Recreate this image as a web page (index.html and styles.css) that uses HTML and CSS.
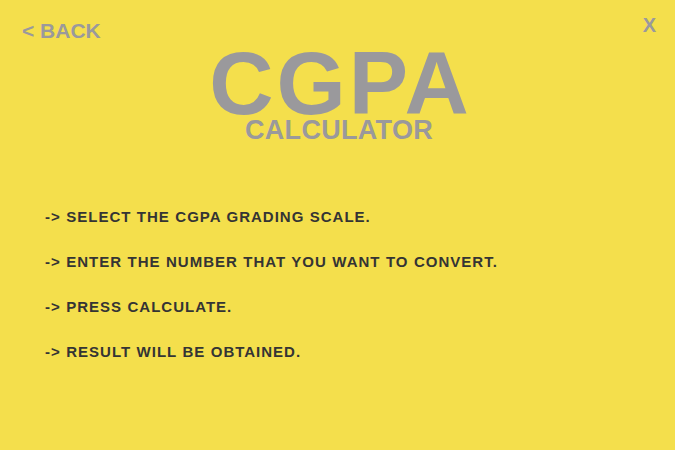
FILE: index.html
```html
<!DOCTYPE html>
<html lang="en">
<head>
<meta charset="utf-8">
<title>CGPA Calculator</title>
<link rel="stylesheet" href="styles.css">
</head>
<body>
<div class="page">
  <header class="topbar">
    <a class="back" href="#">&lt; BACK</a>
    <div class="title">
      <div class="title-main">CGPA</div>
      <div class="title-sub">CALCULATOR</div>
    </div>
    <a class="close" href="#">X</a>
  </header>
  <ul class="steps">
    <li>-&gt; SELECT THE CGPA GRADING SCALE.</li>
    <li>-&gt; ENTER THE NUMBER THAT YOU WANT TO CONVERT.</li>
    <li>-&gt; PRESS CALCULATE.</li>
    <li>-&gt; RESULT WILL BE OBTAINED.</li>
  </ul>
</div>
</body>
</html>
```
FILE: styles.css
```css
html, body {
  margin: 0;
  padding: 0;
}
body {
  background: #f4df4c;
  font-family: "Liberation Sans", Arial, sans-serif;
  font-weight: bold;
}
.page {
  width: 675px;
  height: 450px;
  overflow: hidden;
}
.topbar {
  display: grid;
  grid-template-columns: 1fr auto 1fr;
  align-items: start;
  padding: 15px 19px 0 22px;
}
.back, .close {
  color: #9a999c;
  text-decoration: none;
  line-height: 1;
}
.back {
  font-size: 21px;
  margin-top: 5px;
  justify-self: start;
}
.close {
  font-size: 20px;
  justify-self: end;
}
.title {
  margin-top: 33px;
  text-align: center;
  color: #9a999c;
}
.title-main {
  font-size: 89px;
  line-height: 70px;
  letter-spacing: 3px;
  padding-left: 3px;
}
.title-sub {
  font-size: 27px;
  line-height: 24px;
  letter-spacing: 0.3px;
}
.steps {
  list-style: none;
  margin: 67px 0 0 45px;
  padding: 0;
  display: flex;
  flex-direction: column;
  gap: 30px;
  color: #343434;
  font-size: 15px;
  line-height: 15px;
  letter-spacing: 1px;
  word-spacing: 0.3px;
}
```
